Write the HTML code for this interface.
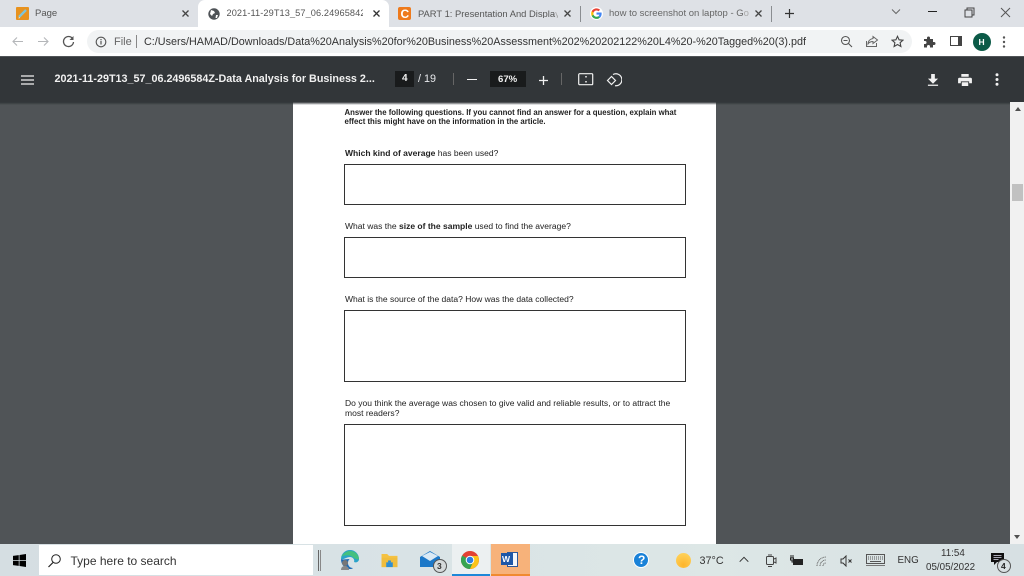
<!DOCTYPE html>
<html><head><meta charset="utf-8"><style>
html,body{margin:0;padding:0;width:1024px;height:576px;overflow:hidden;background:#505457;font-family:"Liberation Sans",sans-serif}
div,span,svg{position:absolute}
.t{white-space:nowrap;line-height:1}
b{font-weight:bold}
.box{left:344px;width:340px;border:1px solid #333;background:#fff}
.q{left:345px;font-size:8.530px;color:#222;white-space:nowrap;line-height:1}
</style></head><body>
<div style="left:0;top:0;width:1024px;height:576px;filter:blur(.25px)">
<!-- tab strip -->
<div style="left:0;top:0;width:1024px;height:27px;background:#dee1e6"></div>
<div style="left:198px;top:0;width:191px;height:27px;background:#fff;border-radius:7px 7px 0 0"></div>
<!-- tab 1 -->
<svg style="left:16px;top:7px" width="13" height="13" viewBox="0 0 13 13"><rect width="13" height="13" rx="1" fill="#e8921e"/><path d="M3 10L10 3" stroke="#7fc4d8" stroke-width="2.4"/><path d="M3 10l-.5 1.500L4 11z" fill="#fff"/></svg>
<div class="t" style="left:35px;top:9px;font-size:9.500px;color:#555">Page</div>
<svg style="left:181px;top:9px" width="9" height="9" viewBox="0 0 9 9"><path d="M1.500 1.500l6 6M7.500 1.500l-6 6" stroke="#444" stroke-width="1.300"/></svg>
<!-- tab 2 -->
<svg style="left:208px;top:8px" width="12" height="12" viewBox="0 0 12 12"><circle cx="6" cy="6" r="5.700" fill="#4f5357"/><path d="M3 2l3 1 1 2-2 1-1 2-2-2zM8 7l2 0-1 3-1.500 0z" fill="#fff"/></svg>
<div class="t" style="left:226.500px;top:9px;font-size:9.200px;color:#555;width:136px;overflow:hidden;letter-spacing:.1px">2021-11-29T13_57_06.24965842</div>
<svg style="left:372px;top:9px" width="9" height="9" viewBox="0 0 9 9"><path d="M1.500 1.500l6 6M7.500 1.500l-6 6" stroke="#333" stroke-width="1.300"/></svg>
<!-- tab 3 -->
<div style="left:398px;top:7px;width:13px;height:13px;background:#ee7a1c;border-radius:2px"></div>
<div class="t" style="left:400.500px;top:7.500px;font-size:12px;font-weight:bold;color:#fff">C</div>
<div class="t" style="left:418px;top:9px;font-size:9.400px;color:#555;width:140px;overflow:hidden">PART 1: Presentation And Displa<span style="position:static;color:#aaa">y</span></div>
<svg style="left:563px;top:9px" width="9" height="9" viewBox="0 0 9 9"><path d="M1.500 1.500l6 6M7.500 1.500l-6 6" stroke="#444" stroke-width="1.300"/></svg>
<div style="left:580px;top:6px;width:1px;height:16px;background:#8a8d91"></div>
<!-- tab 4 -->
<div style="left:590px;top:7px;width:13px;height:13px;background:#fff;border-radius:50%"></div>
<svg style="left:590px;top:7px" width="13" height="13" viewBox="0 0 24 24"><path d="M21.500 12.200c0-.7-.1-1.400-.2-2H12v3.900h5.300c-.2 1.200-.9 2.300-2 3l3.200 2.500c1.900-1.700 3-4.300 3-7.400z" fill="#4285f4"/><path d="M12 22c2.700 0 4.900-.9 6.500-2.400l-3.200-2.500c-.9.600-2 1-3.300 1-2.500 0-4.700-1.700-5.500-4H3.200v2.600C4.800 19.800 8.200 22 12 22z" fill="#34a853"/><path d="M6.500 14.100c-.4-1.200-.4-2.600 0-3.800V7.700H3.200c-1.400 2.800-1.400 6.100 0 8.900z" fill="#fbbc05"/><path d="M12 6.400c1.400 0 2.700.5 3.700 1.500l2.800-2.800C16.800 3.500 14.500 2.600 12 2.600c-3.800 0-7.200 2.200-8.800 5.100l3.300 2.600c.8-2.300 3-3.900 5.500-3.900z" fill="#ea4335"/></svg>
<div class="t" style="left:609px;top:9px;font-size:9.500px;color:#666;width:140px;overflow:hidden">how to screenshot on laptop - G<span style="position:static;color:#aaa">o</span></div>
<svg style="left:754px;top:9px" width="9" height="9" viewBox="0 0 9 9"><path d="M1.500 1.500l6 6M7.500 1.500l-6 6" stroke="#444" stroke-width="1.300"/></svg>
<div style="left:771px;top:6px;width:1px;height:16px;background:#8a8d91"></div>
<svg style="left:784px;top:8px" width="11" height="11" viewBox="0 0 11 11"><path d="M5.500 1v9M1 5.500h9" stroke="#333" stroke-width="1.200"/></svg>
<!-- window controls -->
<svg style="left:891px;top:8px" width="10" height="7" viewBox="0 0 10 7"><path d="M1 1.500l4 4 4-4" fill="none" stroke="#666" stroke-width="1"/></svg>
<div style="left:928px;top:11px;width:9px;height:1px;background:#222"></div>
<svg style="left:964px;top:7px" width="11" height="11" viewBox="0 0 11 11"><path d="M1 3h7v7H1zM3 3V1h7v7H8" fill="none" stroke="#444" stroke-width="1"/></svg>
<svg style="left:1000px;top:7px" width="11" height="11" viewBox="0 0 11 11"><path d="M1 1l9 9M10 1l-9 9" stroke="#555" stroke-width="1"/></svg>
<!-- address bar -->
<div style="left:0;top:27px;width:1024px;height:29px;background:#fff"></div>
<div style="left:87px;top:30px;width:825px;height:23px;background:#f1f3f4;border-radius:12px"></div>
<svg style="left:11px;top:36px" width="13" height="11" viewBox="0 0 13 11"><path d="M12 5.500H2M6 1.500l-4 4 4 4" fill="none" stroke="#b4b6b9" stroke-width="1.100"/></svg>
<svg style="left:37px;top:36px" width="13" height="11" viewBox="0 0 13 11"><path d="M1 5.500h10M7 1.500l4 4-4 4" fill="none" stroke="#b4b6b9" stroke-width="1.100"/></svg>
<svg style="left:62px;top:35px" width="13" height="13" viewBox="0 0 13 13"><path d="M10.500 3.500A5 5 0 1 0 11.500 7" fill="none" stroke="#555" stroke-width="1.300"/><path d="M11.500 1v4h-4z" fill="#555"/></svg>
<svg style="left:95px;top:36px" width="12" height="12" viewBox="0 0 12 12"><circle cx="6" cy="6" r="4.800" fill="none" stroke="#555" stroke-width="1.100"/><path d="M6 5v3.500M6 3v1.200" stroke="#555" stroke-width="1.200"/></svg>
<div class="t" style="left:114px;top:36.500px;font-size:11px;color:#666">File</div>
<div style="left:136px;top:35px;width:1px;height:13px;background:#888"></div>
<div class="t" style="left:144px;top:36.500px;font-size:10.800px;color:#333">C:/Users/HAMAD/Downloads/Data%20Analysis%20for%20Business%20Assessment%202%20202122%20L4%20-%20Tagged%20(3).pdf</div>
<svg style="left:840px;top:35px" width="13" height="13" viewBox="0 0 13 13"><circle cx="5.500" cy="5.500" r="4" fill="none" stroke="#555" stroke-width="1.100"/><path d="M8.500 8.500l3.500 3.500M3.500 5.500h4" stroke="#555" stroke-width="1.100"/></svg>
<svg style="left:865px;top:35px" width="14" height="13" viewBox="0 0 14 13"><path d="M1.500 6v5.500h10V8M8 1.500l4.500 3.500L8 8.500V6.500C5.500 6.500 4 7.500 3 9c0-3 2-5 5-5.500z" fill="none" stroke="#666" stroke-width="1"/></svg>
<svg style="left:891px;top:35px" width="13" height="13" viewBox="0 0 13 13"><path d="M6.500 1.300l1.600 3.500 3.800.4-2.800 2.500.8 3.800-3.400-2-3.400 2 .8-3.800L1.100 5.200l3.800-.4z" fill="none" stroke="#444" stroke-width="1.100"/></svg>
<svg style="left:923px;top:35px" width="13" height="13" viewBox="0 0 13 13"><path d="M1 4h3V3a1.500 1.500 0 0 1 3 0v1h3v3h1a1.500 1.500 0 0 1 0 3h-1v2.500H7v-1a1.500 1.500 0 0 0-3 0v1H1V9h1a1.500 1.500 0 0 0 0-3H1z" fill="#444"/></svg>
<div style="left:950px;top:36px;width:7px;height:8px;border:1.500px solid #444;border-right-width:4px;box-sizing:content-box"></div>
<div style="left:973px;top:33px;width:18px;height:18px;border-radius:50%;background:#0b5a47"></div>
<div class="t" style="left:978.500px;top:38px;font-size:8.500px;font-weight:bold;color:#fff">H</div>
<svg style="left:1002px;top:36px" width="4" height="12" viewBox="0 0 4 12"><circle cx="2" cy="1.500" r="1.200" fill="#555"/><circle cx="2" cy="6" r="1.200" fill="#555"/><circle cx="2" cy="10.500" r="1.200" fill="#555"/></svg>
<!-- pdf toolbar -->
<div style="left:0;top:57px;width:1024px;height:45px;background:#323639"></div>
<svg style="left:21px;top:75px" width="13" height="10" viewBox="0 0 13 10"><path d="M0 1h13M0 5h13M0 9h13" stroke="#f1f1f1" stroke-width="1.300"/></svg>
<div class="t" style="left:54.500px;top:73.500px;font-size:10.770px;font-weight:bold;color:#f1f1f1">2021-11-29T13_57_06.2496584Z-Data Analysis for Business 2...</div>
<div style="left:395px;top:71px;width:19px;height:16px;background:#191b1c"></div>
<div class="t" style="left:402px;top:74px;font-size:10px;font-weight:bold;color:#f1f1f1">4</div>
<div class="t" style="left:418px;top:74px;font-size:10.800px;color:#e8eaed">/ 19</div>
<div style="left:453px;top:73px;width:1px;height:12px;background:#666"></div>
<div style="left:467px;top:79px;width:10px;height:1px;background:#f1f1f1"></div>
<div style="left:490px;top:71px;width:36px;height:16px;background:#191b1c"></div>
<div class="t" style="left:498px;top:74.500px;font-size:9.600px;font-weight:bold;color:#f1f1f1">67%</div>
<svg style="left:538px;top:75px" width="11" height="11" viewBox="0 0 11 11"><path d="M5.500 1v9M1 5.500h9" stroke="#f1f1f1" stroke-width="1.300"/></svg>
<div style="left:561px;top:73px;width:1px;height:12px;background:#666"></div>
<svg style="left:578px;top:73px" width="16" height="13" viewBox="0 0 16 13"><rect x=".7" y=".7" width="14" height="11" rx="1" fill="none" stroke="#f1f1f1" stroke-width="1.200"/><path d="M8 3v1.500M8 8v1.500" stroke="#f1f1f1" stroke-width="1.500"/></svg>
<svg style="left:606px;top:72px" width="16" height="16" viewBox="0 0 16 16"><path d="M1.500 8.500L5.500 4.500l4 4-4 4z" fill="none" stroke="#f1f1f1" stroke-width="1.200"/><path d="M7 2.500a6 6 0 1 1 2 11.200" fill="none" stroke="#f1f1f1" stroke-width="1.200"/></svg>
<svg style="left:927px;top:74px" width="12" height="12" viewBox="0 0 12 13"><path d="M4 0h4v5h3.500L6 10.500.5 5H4zM.5 11.500h11v1.300H.5z" fill="#f1f1f1"/></svg>
<svg style="left:958px;top:74px" width="14" height="12" viewBox="0 0 15 13"><path d="M3.500 0h8v3h-8zM1.500 4h12a1.500 1.500 0 0 1 1.500 1.500V10h-3V8H3v2H0V5.500A1.500 1.500 0 0 1 1.500 4zM4 9h7v4H4z" fill="#f1f1f1"/></svg>
<svg style="left:995px;top:73px" width="4" height="13" viewBox="0 0 4 13"><circle cx="2" cy="1.700" r="1.500" fill="#f1f1f1"/><circle cx="2" cy="6.500" r="1.500" fill="#f1f1f1"/><circle cx="2" cy="11.300" r="1.500" fill="#f1f1f1"/></svg>
<!-- scrollbar -->
<div style="left:1010px;top:102px;width:14px;height:442px;background:#f1f1f1"></div>
<div style="left:1012px;top:184px;width:11px;height:17px;background:#c1c1c1"></div>
<div style="left:1015px;top:107px;width:0;height:0;border-left:3.500px solid transparent;border-right:3.500px solid transparent;border-bottom:4px solid #505050"></div>
<div style="left:1014px;top:535px;width:0;height:0;border-left:3.500px solid transparent;border-right:3.500px solid transparent;border-top:4px solid #505050"></div>
<!-- pdf page -->
<div style="left:293px;top:102px;width:423px;height:442px;background:#fff"></div>
<div style="left:0;top:102px;width:1010px;height:3px;background:linear-gradient(#2f3336,rgba(60,64,67,0))"></div>
<div class="t" style="left:344.500px;top:108.500px;font-size:7.800px;font-weight:bold;color:#222">Answer the following questions. If you cannot find an answer for a question, explain what</div>
<div class="t" style="left:344.500px;top:118px;font-size:7.800px;font-weight:bold;color:#222">effect this might have on the information in the article.</div>
<div class="q" style="top:148.500px"><b>Which kind of average</b> has been used?</div>
<div class="box" style="top:164px;height:39px"></div>
<div class="q" style="top:222px"><span style="position:static">What was the </span><b>size of the sample</b> used to find the average?</div>
<div class="box" style="top:237px;height:39px"></div>
<div class="q" style="top:295px">What is the source of the data? How was the data collected?</div>
<div class="box" style="top:310px;height:70px"></div>
<div class="q" style="top:399px">Do you think the average was chosen to give valid and reliable results, or to attract the</div>
<div class="q" style="top:409px">most readers?</div>
<div class="box" style="top:424px;height:100px"></div>
<!-- taskbar -->
<div style="left:0;top:544px;width:1024px;height:32px;background:linear-gradient(90deg,#d5dee2,#d9e3e6 40%,#dde7e6 70%,#d7e0e3)"></div>
<svg style="left:13px;top:554px" width="13" height="13" viewBox="0 0 12 12"><path d="M0 1.700L5.300 1v4.700H0zM6 .9L12 0v5.700H6zM0 6.400h5.300V11L0 10.300zM6 6.400h6V12l-6-.9z" fill="#000"/></svg>
<div style="left:39px;top:545px;width:274px;height:30px;background:#fff"></div>
<svg style="left:47px;top:553px" width="15" height="15" viewBox="0 0 15 15"><circle cx="9" cy="6" r="4.300" fill="none" stroke="#222" stroke-width="1"/><path d="M6 9.500L1.500 14" stroke="#222" stroke-width="1.200"/></svg>
<div class="t" style="left:70.500px;top:555px;font-size:12px;color:#333">Type here to search</div>
<div style="left:318px;top:550px;width:1px;height:21px;background:#666"></div>
<div style="left:320px;top:550px;width:1px;height:21px;background:#888"></div>
<!-- edge -->
<svg style="left:340px;top:550px" width="20" height="20" viewBox="0 0 20 20"><path d="M1 9a9 9 0 0 1 18 0c0 3-3 4-5 3 1-2-1-5-4-5-4 0-6 3-9 2z" fill="#2aa3c9"/><path d="M19 9c0-2-2-8-9-8-4 0-7 3-9 6 3-2 9-3 13 1 2 1 4 2 5 1z" fill="#45c07f"/><path d="M1 9c0 6 4 10 9 10 1 0 2 0 3-1-3 0-5-2-5-5 0-2 1-4 2-4-4 0-7 1-9 0z" fill="#1a69b5"/><circle cx="5" cy="13" r="3" fill="#777"/><path d="M1 20c0-3 2-4 4-4s4 1 4 4z" fill="#888"/></svg>
<!-- folder -->
<svg style="left:381px;top:553px" width="17" height="15" viewBox="0 0 17 16"><path d="M0 1h6l2 2h9v12H0z" fill="#f5c242"/><path d="M0 5h17v10H0z" fill="#f0bd3d"/><path d="M5 10h7v5H5z" fill="#2d8fd5"/><path d="M7 8h3v2H7z" fill="#2d8fd5"/></svg>
<!-- mail -->
<svg style="left:420px;top:551px" width="20" height="16" viewBox="0 0 20 16"><path d="M0 6L10 0l10 6v10H0z" fill="#1c78c8"/><path d="M2 5l8-4 8 4-8 5z" fill="#dbeaf5"/></svg>
<div style="left:433px;top:559px;width:12px;height:12px;border-radius:50%;background:#d5dadb;border:1px solid #555"></div>
<div class="t" style="left:437px;top:561.500px;font-size:8.500px;font-weight:bold;color:#333">3</div>
<!-- chrome -->
<div style="left:452px;top:544px;width:38px;height:32px;background:#ecf0f1"></div>
<div style="left:452px;top:574px;width:38px;height:2px;background:#1e88d8"></div>
<svg style="left:461px;top:551px" width="18" height="18" viewBox="0 0 18 18"><circle cx="9" cy="9" r="9" fill="#e34133"/><path d="M9 9L1.200 4.500A9 9 0 0 0 9 18l4-9z" fill="#37a452"/><path d="M17 5H9l4 4-4 9a9 9 0 0 0 8-13z" fill="#fcc419"/><circle cx="9" cy="9" r="4.300" fill="#fff"/><circle cx="9" cy="9" r="3.300" fill="#2d7de0"/></svg>
<!-- word -->
<div style="left:491px;top:544px;width:39px;height:32px;background:#f7b27a"></div>
<div style="left:491px;top:574px;width:39px;height:2px;background:#f08a30"></div>
<div style="left:507px;top:552px;width:11px;height:15px;background:#f4f7fb;border:1px solid #2b579a;box-sizing:border-box"></div>
<div style="left:501px;top:553px;width:12px;height:12px;background:#1d57a8"></div>
<div class="t" style="left:502px;top:555px;font-size:8.500px;font-weight:bold;color:#fff">W</div>
<!-- help -->
<div style="left:633px;top:552px;width:16px;height:16px;border-radius:50%;background:#1a82d8;border:1px solid #fff;box-sizing:border-box"></div>
<div class="t" style="left:638px;top:554px;font-size:12px;font-weight:bold;color:#fff">?</div>
<!-- sun -->
<div style="left:676px;top:553px;width:15px;height:15px;border-radius:50%;background:radial-gradient(circle at 50% 80%,#fdb52c,#ffd763)"></div>
<div class="t" style="left:699.500px;top:556px;font-size:10.800px;color:#333">37°C</div>
<svg style="left:739px;top:556px" width="10" height="7" viewBox="0 0 10 7"><path d="M.7 5.700L5 1.300l4.300 4.400" fill="none" stroke="#333" stroke-width="1"/></svg>
<svg style="left:765px;top:554px" width="12" height="14" viewBox="0 0 12 14"><rect x="1.500" y="2.500" width="7" height="8" rx="1" fill="none" stroke="#444"/><path d="M9 5l2-1v5l-2-1M3 1h4M3 12.500h4" fill="none" stroke="#444"/></svg>
<svg style="left:789px;top:555px" width="14" height="12" viewBox="0 0 14 12"><rect x="4" y="4" width="10" height="6" fill="#222"/><path d="M2 0v3M4 0v3M1.500 3h3v2H1.500zM3 5v2h1" fill="none" stroke="#222"/></svg>
<svg style="left:816px;top:555px" width="14" height="12" viewBox="0 0 14 12"><path d="M1 11A9 9 0 0 1 10 2M4 11a6 6 0 0 1 6-6M7 11a3 3 0 0 1 3-3" fill="none" stroke="#666" stroke-dasharray="1 .6"/></svg>
<svg style="left:840px;top:555px" width="13" height="12" viewBox="0 0 13 12"><path d="M1 4h2l3-3v10L3 8H1z" fill="none" stroke="#333"/><path d="M8.500 4.500l3 3M11.500 4.500l-3 3" stroke="#333"/></svg>
<svg style="left:866px;top:554px" width="19" height="12" viewBox="0 0 19 12"><rect x=".5" y=".5" width="18" height="9" fill="none" stroke="#555"/><path d="M2 3h15M2 5h15" stroke="#555" stroke-dasharray="1 1"/><path d="M4 7.500h11" stroke="#555"/><path d="M0 11.500h19" stroke="#777"/></svg>
<div class="t" style="left:897.500px;top:556px;font-size:9.800px;color:#333">ENG</div>
<div class="t" style="left:941px;top:548.500px;font-size:9.800px;color:#333">11:54</div>
<div class="t" style="left:926px;top:563px;font-size:9.800px;color:#333">05/05/2022</div>
<svg style="left:991px;top:553px" width="14" height="13" viewBox="0 0 14 13"><path d="M0 0h13v9H6l-3 3V9H0z" fill="#111"/><path d="M2.500 2.500h8M2.500 4.500h8M2.500 6.500h5" stroke="#dde" stroke-width=".8"/></svg>
<div style="left:997px;top:559px;width:12px;height:12px;border-radius:50%;background:#d8dfe2;border:1px solid #555"></div>
<div class="t" style="left:1001px;top:561.500px;font-size:8.500px;font-weight:bold;color:#222">4</div>
</div>
</body></html>
